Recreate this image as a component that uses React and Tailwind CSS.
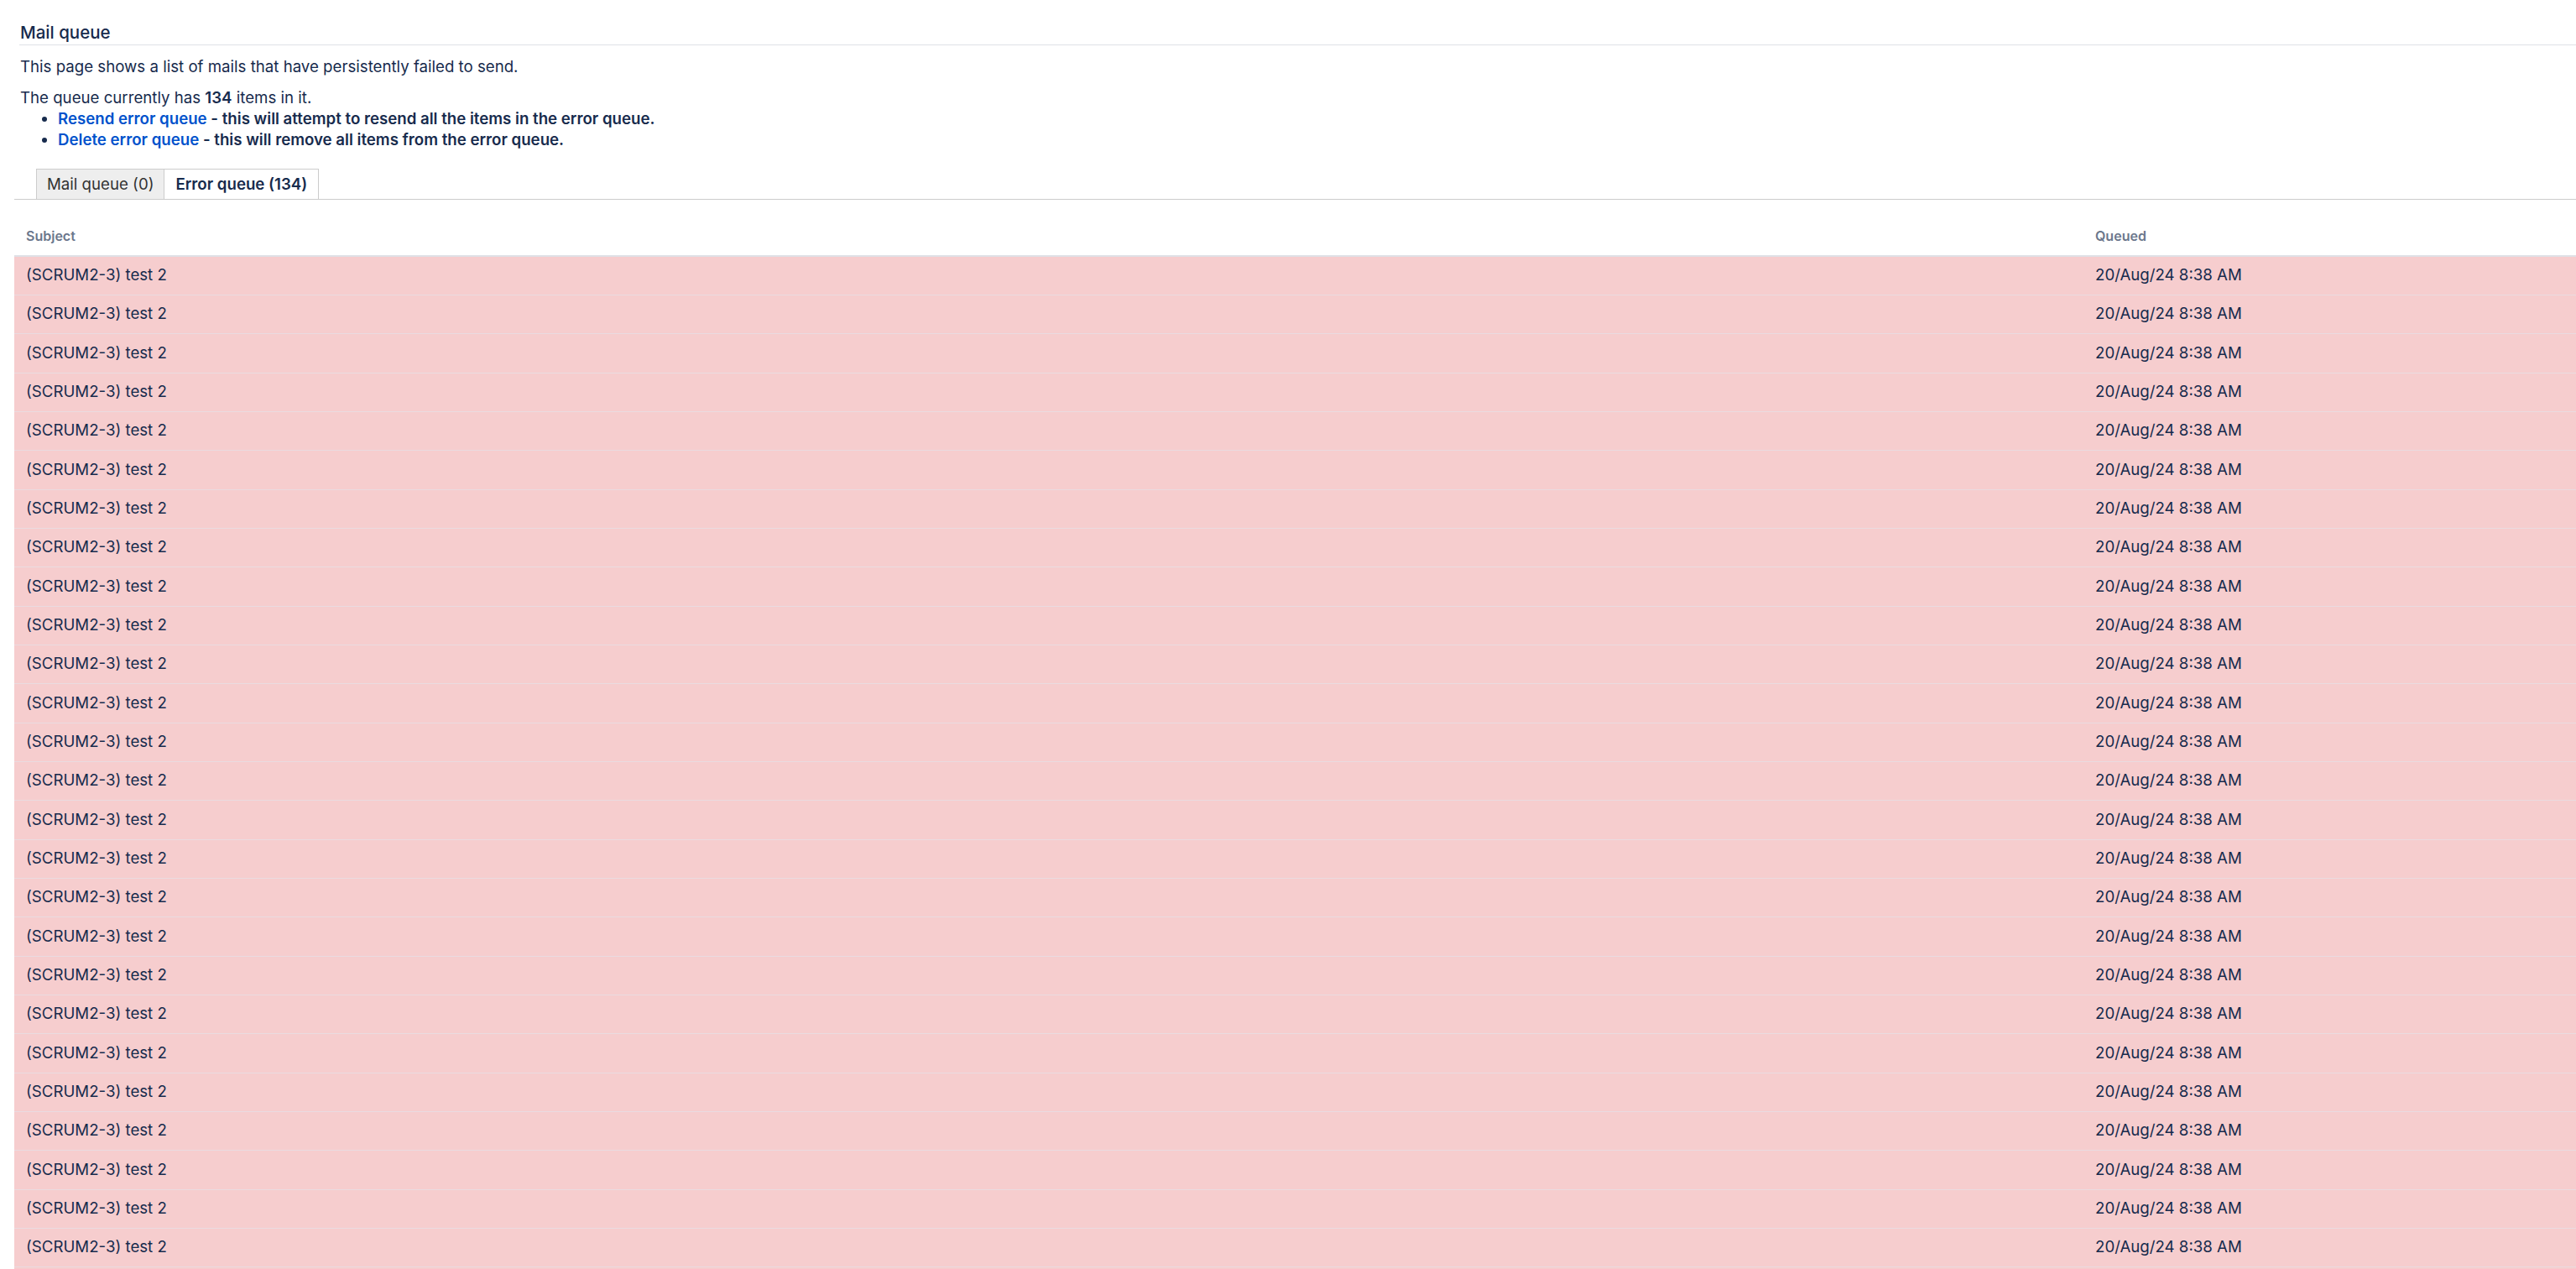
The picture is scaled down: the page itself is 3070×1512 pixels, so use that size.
import React from 'react'

const FONT = "font-['Inter','Noto_Sans',sans-serif]"

// 134 failed mails in the error queue
const rows = Array.from({ length: 134 }, (_, i) => ({
  id: i,
  subject: '(SCRUM2-3) test 2',
  queued: '20/Aug/24 8:38 AM',
}))

const MailQueuePage = () => {
  return (
    <div className={`${FONT} min-h-screen bg-white text-[#172b4d]`}>
      {/* Page header */}
      <div className="pl-[23px] pt-[25px]">
        <h2 className="border-b border-[#dfe1e6] pl-px text-[20.5px] font-medium leading-[28px]">
          Mail queue
        </h2>
      </div>

      <div className="pl-[24px] text-[18.67px] leading-[25px]">
        <p className="mt-[12.7px]">
          This page shows a list of mails that have persistently failed to send.
        </p>
        <p className="mt-[12.7px]">
          The queue currently has <strong className="font-semibold">134</strong> items in it.
        </p>
        <ul className="list-disc pl-[45px] font-semibold">
          <li>
            <a href="#" className="text-[#0052cc]">Resend error queue</a>
            {' '}- this will attempt to resend all the items in the error queue.
          </li>
          <li>
            <a href="#" className="text-[#0052cc]">Delete error queue</a>
            {' '}- this will remove all items from the error queue.
          </li>
        </ul>
      </div>

      {/* Tabs */}
      <div className="ml-[17px] mt-[22px] flex border-b border-[#cccccc] pl-[26px] text-[18.67px] leading-[26.67px]">
        <div className="flex h-[36px] items-center border border-b-0 border-[#cccccc] bg-[#eeeeee] px-[12px] text-[#333333]">
          Mail queue (0)
        </div>
        <div className="flex h-[36px] items-center border border-b-0 border-l-0 border-[#cccccc] bg-white px-[13px] font-semibold text-[#172b4d]">
          Error queue (134)
        </div>
      </div>

      {/* Error queue table */}
      <table className="ml-[17px] mt-[20px] w-[calc(100%-17px)] border-collapse text-left">
        <thead>
          <tr className="border-b-2 border-[#dfe1e6]">
            <th className="w-[2466px] px-[14px] py-[9.33px] text-[16px] font-semibold leading-[26.67px] text-[#6b778c]">
              Subject
            </th>
            <th className="px-[14px] py-[9.33px] text-[16px] font-semibold leading-[26.67px] text-[#6b778c]">
              Queued
            </th>
          </tr>
        </thead>
        <tbody>
          {rows.map((row) => (
            <tr key={row.id} className="border-b border-[#eadbe0] bg-[#f6cdce]">
              <td className="px-[14px] py-[9.33px] text-[18.67px] font-normal leading-[26.67px]">
                {row.subject}
              </td>
              <td className="px-[14px] py-[9.33px] text-[18.67px] font-normal leading-[26.67px]">
                {row.queued}
              </td>
            </tr>
          ))}
        </tbody>
      </table>
    </div>
  )
}

export default function App() {
  return <MailQueuePage />
}
